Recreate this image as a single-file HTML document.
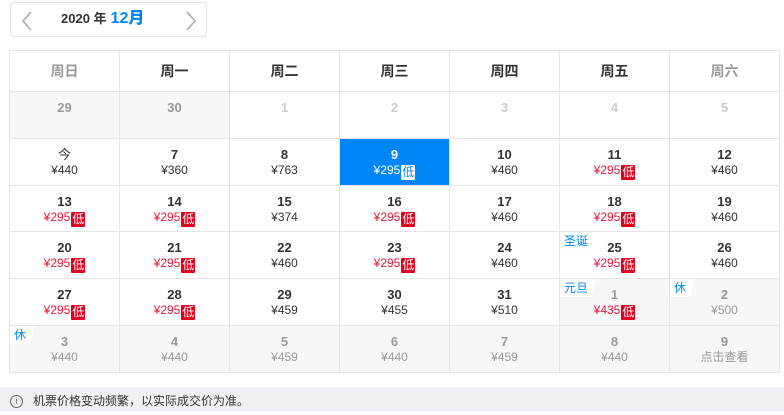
<!DOCTYPE html><html><head><meta charset="utf-8"><style>
body{margin:0;width:784px;height:411px;background:#fff;font-family:"Liberation Sans","Noto Sans CJK SC",sans-serif;position:relative;overflow:hidden}
.nav{position:absolute;left:10px;top:2px;width:197px;height:35px;border:1px solid #e3e3e3;border-radius:4px;box-sizing:border-box}
.nav .t{position:absolute;left:50px;top:6px;font-size:13px;font-weight:bold;color:#333;line-height:20px}
.nav .t b{color:#0086f6;font-size:16px;margin-left:4px}
table{position:absolute;left:9px;top:50px;border-collapse:collapse;table-layout:fixed}
td{border:1px solid #e6e6e6;width:109px;text-align:center;vertical-align:top;position:relative;padding:0;font-size:12px;color:#333}
tr.h td{height:40px;vertical-align:middle;font-size:14px;font-weight:bold;color:#333}
tr.h td.w{color:#999}
tr.r td{height:45.8px}
.d{display:block;margin-top:8px;font-size:13px;font-weight:bold;line-height:15px}
.p{display:block;line-height:16px}
.g{background:#f7f7f7}.g .d,.g .p{color:#999}
.l .d{color:#ccc}
.red{color:#e8173a}
.lo{display:inline-block;background:#e1001d;color:#fff;font-size:12px;line-height:15px;width:14px;margin-left:1px;vertical-align:-2px;border-radius:1px}
.sel{background:#0086f6}.sel .d,.sel .p{color:#fff}
.sel .lo{background:#fff;color:#0086f6}
.tag{position:absolute;left:0;top:0;background:#fff;color:#0086f6;font-size:12px;line-height:18px;padding:0 8px 0 4px;border-radius:0 0 4px 0;box-shadow:1px 1px 2px rgba(0,0,0,.08);clip-path:polygon(0 0,100% 0,85% 100%,0 100%)}
.foot{position:absolute;left:0;top:387px;width:784px;height:24px;background:#f0f1f5;font-size:12px;color:#333;line-height:28px}
.foot i{position:absolute;left:10px;top:8px;width:11px;height:11px;border:1px solid #666;border-radius:50%;font-style:normal;font-size:9px;line-height:11px;text-align:center;color:#666}
</style></head><body>
<div class="nav"><svg style="position:absolute;left:10px;top:8px" width="12" height="20"><path d="M10 1L2 10l8 9" fill="none" stroke="#aaa" stroke-width="1.6"/></svg><span class="t">2020 年<b>12月</b></span><svg style="position:absolute;left:174px;top:8px" width="12" height="20"><path d="M2 1l8 9-8 9" fill="none" stroke="#aaa" stroke-width="1.6"/></svg></div>
<table>
<tr class="h"><td class="w">周日</td><td>周一</td><td>周二</td><td>周三</td><td>周四</td><td>周五</td><td class="w">周六</td></tr>
<tr class="r"><td class="g"><span class="d">29</span></td><td class="g"><span class="d">30</span></td><td class="l"><span class="d">1</span></td><td class="l"><span class="d">2</span></td><td class="l"><span class="d">3</span></td><td class="l"><span class="d">4</span></td><td class="l"><span class="d">5</span></td></tr>
<tr class="r"><td><span class="d" style="font-weight:normal">今</span><span class="p">¥440</span></td><td><span class="d">7</span><span class="p">¥360</span></td><td><span class="d">8</span><span class="p">¥763</span></td><td class="sel"><span class="d">9</span><span class="p">¥295<span class="lo">低</span></span></td><td><span class="d">10</span><span class="p">¥460</span></td><td><span class="d">11</span><span class="p red">¥295<span class="lo">低</span></span></td><td><span class="d">12</span><span class="p">¥460</span></td></tr>
<tr class="r"><td><span class="d">13</span><span class="p red">¥295<span class="lo">低</span></span></td><td><span class="d">14</span><span class="p red">¥295<span class="lo">低</span></span></td><td><span class="d">15</span><span class="p">¥374</span></td><td><span class="d">16</span><span class="p red">¥295<span class="lo">低</span></span></td><td><span class="d">17</span><span class="p">¥460</span></td><td><span class="d">18</span><span class="p red">¥295<span class="lo">低</span></span></td><td><span class="d">19</span><span class="p">¥460</span></td></tr>
<tr class="r"><td><span class="d">20</span><span class="p red">¥295<span class="lo">低</span></span></td><td><span class="d">21</span><span class="p red">¥295<span class="lo">低</span></span></td><td><span class="d">22</span><span class="p">¥460</span></td><td><span class="d">23</span><span class="p red">¥295<span class="lo">低</span></span></td><td><span class="d">24</span><span class="p">¥460</span></td><td><span class="tag">圣诞</span><span class="d">25</span><span class="p red">¥295<span class="lo">低</span></span></td><td><span class="d">26</span><span class="p">¥460</span></td></tr>
<tr class="r"><td><span class="d">27</span><span class="p red">¥295<span class="lo">低</span></span></td><td><span class="d">28</span><span class="p red">¥295<span class="lo">低</span></span></td><td><span class="d">29</span><span class="p">¥459</span></td><td><span class="d">30</span><span class="p">¥455</span></td><td><span class="d">31</span><span class="p">¥510</span></td><td class="g"><span class="tag">元旦</span><span class="d">1</span><span class="p red" style="color:#e8173a">¥435<span class="lo">低</span></span></td><td class="g"><span class="tag">休</span><span class="d">2</span><span class="p">¥500</span></td></tr>
<tr class="r"><td class="g"><span class="tag">休</span><span class="d">3</span><span class="p">¥440</span></td><td class="g"><span class="d">4</span><span class="p">¥440</span></td><td class="g"><span class="d">5</span><span class="p">¥459</span></td><td class="g"><span class="d">6</span><span class="p">¥440</span></td><td class="g"><span class="d">7</span><span class="p">¥459</span></td><td class="g"><span class="d">8</span><span class="p">¥440</span></td><td class="g"><span class="d">9</span><span class="p">点击查看</span></td></tr>
</table>
<div class="foot"><i>i</i><span style="position:absolute;left:33px">机票价格变动频繁，以实际成交价为准。</span></div>
</body></html>
